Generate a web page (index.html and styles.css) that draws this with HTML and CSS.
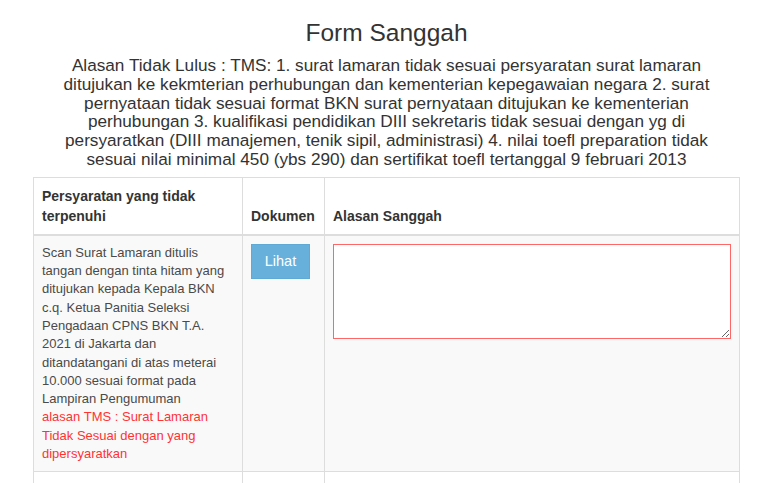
FILE: index.html
```html
<!DOCTYPE html>
<html lang="id">
<head>
<meta charset="utf-8">
<title>Form Sanggah</title>
<link rel="stylesheet" href="styles.css">
</head>
<body>
<div class="page">
  <h3 class="title">Form Sanggah</h3>
  <h4 class="reason">Alasan Tidak Lulus : TMS: 1. surat lamaran tidak sesuai persyaratan surat lamaran ditujukan ke kekmterian perhubungan dan kementerian kepegawaian negara 2. surat pernyataan tidak sesuai format BKN surat pernyataan ditujukan ke kementerian perhubungan 3. kualifikasi pendidikan DIII sekretaris tidak sesuai dengan yg di persyaratkan (DIII manajemen, tenik sipil, administrasi) 4. nilai toefl preparation tidak sesuai nilai minimal 450 (ybs 290) dan sertifikat toefl tertanggal 9 februari 2013</h4>
  <table class="grid">
    <thead>
      <tr>
        <th class="c1">Persyaratan yang tidak terpenuhi</th>
        <th class="c2">Dokumen</th>
        <th class="c3">Alasan Sanggah</th>
      </tr>
    </thead>
    <tbody>
      <tr class="odd">
        <td>Scan Surat Lamaran ditulis tangan dengan tinta hitam yang ditujukan kepada Kepala BKN c.q. Ketua Panitia Seleksi Pengadaan CPNS BKN T.A. 2021 di Jakarta dan ditandatangani di atas meterai 10.000 sesuai format pada Lampiran Pengumuman<br><span class="tms">alasan TMS : Surat Lamaran Tidak Sesuai dengan yang dipersyaratkan</span></td>
        <td><button class="btn" type="button">Lihat</button></td>
        <td><textarea class="area"></textarea></td>
      </tr>
      <tr class="even">
        <td>&nbsp;</td>
        <td>&nbsp;</td>
        <td>&nbsp;</td>
      </tr>
    </tbody>
  </table>
</div>
</body>
</html>
```
FILE: styles.css
```css
html, body {
  margin: 0;
  padding: 0;
  background: #fff;
}
body {
  font-family: "Liberation Sans", Arial, Helvetica, sans-serif;
  color: #333;
  font-size: 13px;
  line-height: 18.3px;
}
.page {
  width: 707px;
  padding: 20px 0 0 33px;
}
.title {
  margin: 0;
  font-size: 24.5px;
  font-weight: normal;
  line-height: 26px;
  text-align: center;
}
.reason {
  margin: 10px 9px 8px;
  font-size: 17.2px;
  font-weight: normal;
  line-height: 18.8px;
  text-align: center;
}
.grid {
  width: 100%;
  border-collapse: collapse;
  border-spacing: 0;
  border: 1px solid #ddd;
}
.grid th,
.grid td {
  padding: 8px;
  border: 1px solid #ddd;
  text-align: left;
}
.grid th {
  font-size: 14px;
  line-height: 20px;
  font-weight: bold;
  vertical-align: bottom;
  border-bottom-width: 2px;
}
.grid td {
  vertical-align: top;
  color: #4a4a4a;
}
.c1 { width: 192px; }
.c2 { width: 65px; }
.odd td { background: #f9f9f9; }
.tms { color: #ff3333; }
.btn {
  display: block;
  width: 59px;
  height: 35px;
  border: 1px solid #5ea9d6;
  border-radius: 0;
  background: #67b0dc;
  color: #fff;
  font-family: inherit;
  font-size: 14.5px;
  padding: 0;
}
.area {
  display: block;
  width: 398px;
  height: 95px;
  box-sizing: border-box;
  margin: 0;
  border: 1px solid #ff6666;
  background: #fff;
  resize: both;
}
```
